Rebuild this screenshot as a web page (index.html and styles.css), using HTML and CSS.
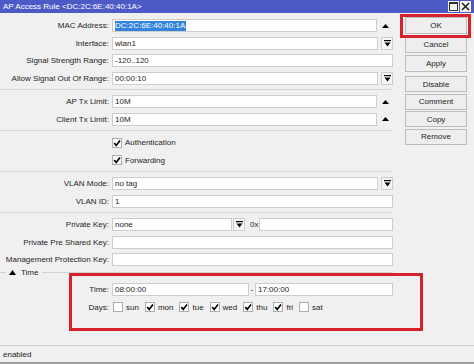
FILE: index.html
```html
<!DOCTYPE html>
<html lang="en">
<head>
  <meta charset="UTF-8">
  <meta name="viewport" content="width=device-width, initial-scale=1.0">
  <title>AP Access Rule</title>
  <link rel="stylesheet" href="styles.css">
</head>
<body>

<div class="window">
  <div class="titlebar">
    <span class="title">AP Access Rule &lt;DC:2C:6E:40:40:1A&gt;</span>
    <div class="title-buttons">
      <span class="tb-btn">
        <svg width="9" height="9" viewBox="0 0 9 9"><rect x="0.5" y="0.5" width="8" height="8" fill="none" stroke="#333"/><rect x="0.5" y="0.5" width="8" height="1.5" fill="#333"/></svg>
      </span>
      <span class="tb-btn">
        <svg width="9" height="9" viewBox="0 0 9 9"><path d="M1 1 L8 8 M8 1 L1 8" stroke="#222" stroke-width="1.6"/></svg>
      </span>
    </div>
  </div>

  <div class="content">
    <div class="form">
      <div class="group first">
        <div class="row">
          <span class="label">MAC Address:</span>
          <div class="field"><span class="selected">DC:2C:6E:40:40:1A</span></div>
          <span class="arrow-up"><svg width="7" height="4" viewBox="0 0 7 4"><path d="M0 4 L3.5 0 L7 4Z"/></svg></span>
        </div>
        <div class="row">
          <span class="label">Interface:</span>
          <div class="field">wlan1</div>
          <span class="drop-slot"><span class="drop"><svg width="7" height="7" viewBox="0 0 7 7"><rect width="7" height="1.2"/><path d="M0.5 2.6 H6.5 L3.5 6.6Z"/></svg></span></span>
        </div>
        <div class="row">
          <span class="label">Signal Strength Range:</span>
          <div class="field">-120..120</div>
        </div>
        <div class="row">
          <span class="label">Allow Signal Out Of Range:</span>
          <div class="field">00:00:10</div>
          <span class="drop-slot"><span class="drop"><svg width="7" height="7" viewBox="0 0 7 7"><rect width="7" height="1.2"/><path d="M0.5 2.6 H6.5 L3.5 6.6Z"/></svg></span></span>
        </div>
      </div>

      <div class="group">
        <div class="row">
          <span class="label">AP Tx Limit:</span>
          <div class="field">10M</div>
          <span class="arrow-up"><svg width="7" height="4" viewBox="0 0 7 4"><path d="M0 4 L3.5 0 L7 4Z"/></svg></span>
        </div>
        <div class="row">
          <span class="label">Client Tx Limit:</span>
          <div class="field">10M</div>
          <span class="arrow-up"><svg width="7" height="4" viewBox="0 0 7 4"><path d="M0 4 L3.5 0 L7 4Z"/></svg></span>
        </div>
      </div>

      <div class="group">
        <div class="row">
          <span class="label"></span>
          <span class="check on"><svg width="8" height="8" viewBox="0 0 8 8"><path d="M1.2 4 L3.2 6.4 L7 1.4" fill="none" stroke="#000" stroke-width="1.7"/></svg></span>
          <span class="check-text">Authentication</span>
        </div>
        <div class="row">
          <span class="label"></span>
          <span class="check on"><svg width="8" height="8" viewBox="0 0 8 8"><path d="M1.2 4 L3.2 6.4 L7 1.4" fill="none" stroke="#000" stroke-width="1.7"/></svg></span>
          <span class="check-text">Forwarding</span>
        </div>
      </div>

      <div class="group">
        <div class="row">
          <span class="label">VLAN Mode:</span>
          <div class="field">no tag</div>
          <span class="drop-slot"><span class="drop"><svg width="7" height="7" viewBox="0 0 7 7"><rect width="7" height="1.2"/><path d="M0.5 2.6 H6.5 L3.5 6.6Z"/></svg></span></span>
        </div>
        <div class="row">
          <span class="label">VLAN ID:</span>
          <div class="field">1</div>
        </div>
      </div>

      <div class="group last">
        <div class="row">
          <span class="label">Private Key:</span>
          <div class="field key">none</div>
          <span class="drop key-drop"><svg width="7" height="7" viewBox="0 0 7 7"><rect width="7" height="1.2"/><path d="M0.5 2.6 H6.5 L3.5 6.6Z"/></svg></span>
          <span class="hex">0x</span>
          <div class="field hex-field"></div>
        </div>
        <div class="row">
          <span class="label">Private Pre Shared Key:</span>
          <div class="field"></div>
        </div>
        <div class="row">
          <span class="label">Management Protection Key:</span>
          <div class="field"></div>
        </div>
      </div>

      <div class="section-head">
        <span class="line short"></span>
        <svg class="toggle" width="7" height="5" viewBox="0 0 7 5"><path d="M0 5 L3.5 0 L7 5Z"/></svg>
        <span class="section-title">Time</span>
        <span class="line"></span>
      </div>

      <div class="row time-row">
        <span class="label">Time:</span>
        <div class="field time-from">08:00:00</div>
        <span class="dash">-</span>
        <div class="field">17:00:00</div>
      </div>
      <div class="row">
        <span class="label">Days:</span>
        <div class="days">
          <span class="day"><span class="check"></span>sun</span>
          <span class="day"><span class="check on"><svg width="8" height="8" viewBox="0 0 8 8"><path d="M1.2 4 L3.2 6.4 L7 1.4" fill="none" stroke="#000" stroke-width="1.7"/></svg></span>mon</span>
          <span class="day"><span class="check on"><svg width="8" height="8" viewBox="0 0 8 8"><path d="M1.2 4 L3.2 6.4 L7 1.4" fill="none" stroke="#000" stroke-width="1.7"/></svg></span>tue</span>
          <span class="day"><span class="check on"><svg width="8" height="8" viewBox="0 0 8 8"><path d="M1.2 4 L3.2 6.4 L7 1.4" fill="none" stroke="#000" stroke-width="1.7"/></svg></span>wed</span>
          <span class="day"><span class="check on"><svg width="8" height="8" viewBox="0 0 8 8"><path d="M1.2 4 L3.2 6.4 L7 1.4" fill="none" stroke="#000" stroke-width="1.7"/></svg></span>thu</span>
          <span class="day"><span class="check on"><svg width="8" height="8" viewBox="0 0 8 8"><path d="M1.2 4 L3.2 6.4 L7 1.4" fill="none" stroke="#000" stroke-width="1.7"/></svg></span>fri</span>
          <span class="day"><span class="check"></span>sat</span>
        </div>
      </div>
    </div>

    <div class="actions">
      <button class="btn big">OK</button>
      <button class="btn big">Cancel</button>
      <button class="btn big">Apply</button>
      <button class="btn gap">Disable</button>
      <button class="btn">Comment</button>
      <button class="btn">Copy</button>
      <button class="btn">Remove</button>
    </div>

    <div class="mark mark-ok"></div>
    <div class="mark mark-time"></div>
  </div>

  <div class="status">enabled</div>
</div>

</body>
</html>
```

FILE: styles.css
```css
body {
  margin: 0;
  font-family: 'Liberation Sans', Arial, sans-serif;
  font-size: 8px;
  color: #1e1e1e;
  background: #f0f0f0;
}

.window {
  width: 474px;
  height: 364px;
  display: flex;
  flex-direction: column;
}

.titlebar {
  height: 13px;
  flex: none;
  background: #4d5ac6;
  color: #fff;
  display: flex;
  align-items: center;
  justify-content: space-between;
  padding-left: 3px;
}

.title-buttons {
  display: flex;
  gap: 1px;
  margin-right: 3px;
}

.tb-btn {
  width: 11px;
  height: 11px;
  background: #f4f4f4;
  display: flex;
  align-items: center;
  justify-content: center;
}

.content {
  flex: 1;
  display: flex;
  position: relative;
}

.form {
  width: 393px;
  padding-top: 6px;
}

.group {
  padding-top: 5px;
  border-bottom: 1px solid #d6d6d6;
}

.group.first {
  padding-top: 0;
}

.group.last {
  border-bottom: none;
}

.row {
  display: flex;
  align-items: center;
  height: 13px;
  margin-bottom: 4.5px;
}

.group.last .row:last-child {
  margin-bottom: 2px;
}

.label {
  width: 109px;
  margin-right: 3px;
  text-align: right;
  white-space: nowrap;
  flex: none;
}

.field {
  flex: 1;
  height: 13px;
  box-sizing: border-box;
  background: #fff;
  border: 1px solid #cdcdcd;
  padding-left: 2px;
  line-height: 11px;
  white-space: nowrap;
}

.selected {
  background: #3584dc;
  color: #fff;
  padding: 0 1px 1px 0;
}

.arrow-up {
  width: 15px;
  flex: none;
  display: flex;
  justify-content: center;
  padding-left: 1px;
}

.drop-slot {
  width: 15px;
  flex: none;
  display: flex;
  justify-content: flex-end;
}

.drop {
  width: 12px;
  height: 13px;
  box-sizing: border-box;
  border: 1px solid #cdcdcd;
  background: #f6f6f6;
  display: flex;
  align-items: center;
  justify-content: center;
  flex: none;
}

.field.key {
  flex: none;
  width: 120px;
}

.key-drop {
  margin-left: 1px;
}

.hex {
  margin-left: 5px;
  width: 9px;
  flex: none;
}

.hex-field {
  margin-left: 0;
}

.check {
  width: 10px;
  height: 10px;
  box-sizing: border-box;
  border: 1px solid #adadad;
  background: #fff;
  display: flex;
  align-items: center;
  justify-content: center;
  flex: none;
}

.check-text {
  margin-left: 3px;
}

.section-head {
  height: 8px;
  display: flex;
  align-items: center;
}

.line {
  flex: 1;
  height: 1px;
  background: #d2d2d2;
}

.line.short {
  flex: none;
  width: 6px;
}

.toggle {
  margin-left: 3px;
}

.section-title {
  margin: 0 4px 0 5px;
}

.time-row {
  margin-top: 7px;
}

.field.time-from {
  flex: none;
  width: 137px;
}

.dash {
  width: 6px;
  text-align: center;
  flex: none;
}

.days {
  display: flex;
  gap: 6px;
  margin-left: 1px;
}

.day {
  display: flex;
  align-items: center;
  gap: 3px;
}

.actions {
  margin-left: 12px;
  padding-top: 4px;
  display: flex;
  flex-direction: column;
  gap: 1.5px;
}

.btn {
  width: 62px;
  height: 16px;
  margin: 0;
  padding: 0;
  border: 1px solid #bcbcbc;
  background: #eeeeee;
  font-family: inherit;
  font-size: 8px;
  color: #1e1e1e;
}

.btn.big {
  height: 17px;
  margin-bottom: 0.5px;
}

.btn.gap {
  margin-top: 2px;
}

.mark {
  position: absolute;
  box-sizing: border-box;
  border: 3px solid #d8222b;
}

.mark-ok {
  left: 400px;
  top: 1px;
  width: 71px;
  height: 24px;
}

.mark-time {
  left: 69px;
  top: 260px;
  width: 354px;
  height: 58px;
}

.status {
  height: 16px;
  flex: none;
  border-top: 1px solid #d3d3d3;
  border-bottom: 2px solid #9c9c9c;
  padding-left: 3px;
  display: flex;
  align-items: center;
}
```
